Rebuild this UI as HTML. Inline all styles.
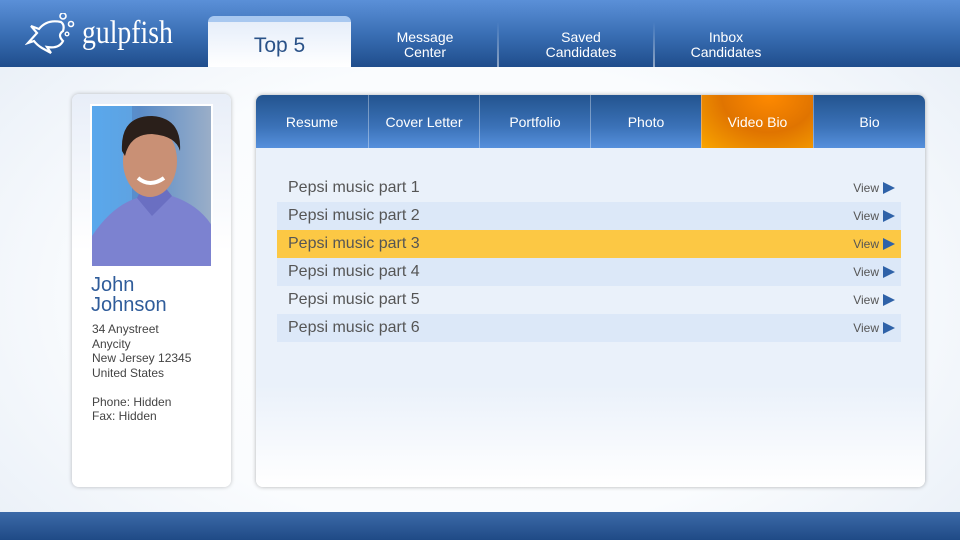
<!DOCTYPE html>
<html><head><meta charset="utf-8"><style>
*{margin:0;padding:0;box-sizing:border-box}
body{width:960px;height:540px;overflow:hidden;position:relative;font-family:"Liberation Sans",sans-serif;background:radial-gradient(ellipse at 50% 55%,#fff 0%,#fafcfe 55%,#e6edf6 100%)}
.hdr{position:absolute;left:0;top:0;width:960px;height:67px;background:linear-gradient(#5b90d8,#3a6fb5 50%,#1f4d8c)}
.logo{position:absolute;left:82px;top:15px;color:#fff;font-family:"Liberation Serif",serif;font-size:33px;transform:scaleX(0.84);transform-origin:left}
.tab5{position:absolute;left:208px;top:16px;width:143px;height:51px;border-radius:6px 6px 0 0;background:linear-gradient(#a8c8f0 0,#a8c8f0 6px,#e6eefa 6px,#fff 100%);color:#2a5288;font-size:21px;text-align:center;padding-top:18px}
.nav{position:absolute;top:30px;color:#fff;font-size:14px;text-align:center;line-height:15px;width:140px}
.sep{position:absolute;top:22px;width:2px;height:45px;background:linear-gradient(rgba(255,255,255,0),rgba(255,255,255,.5))}
.ftr{position:absolute;left:0;top:512px;width:960px;height:28px;background:linear-gradient(#3c6aa8,#1f4a86)}
.card{position:absolute;left:72px;top:94px;width:159px;height:393px;border-radius:7px;background:linear-gradient(#e8eef8,#fff 40%);box-shadow:0 0 4px rgba(0,0,0,.25)}
.photo{position:absolute;left:18px;top:10px;width:123px;height:164px;border:2px solid #fff;overflow:hidden;background:linear-gradient(90deg,#4d9be6,#5a8cc8 40%,#9aaec8)}
.name{position:absolute;left:19px;top:181px;color:#2f5c9a;font-size:20px;line-height:20px}
.addr{position:absolute;left:20px;top:228px;color:#444;font-size:12px;line-height:14.5px}
.panel{position:absolute;left:256px;top:95px;width:669px;height:392px;border-radius:7px;background:#fff;box-shadow:0 0 4px rgba(0,0,0,.3);overflow:hidden}
.tabs{position:absolute;left:0;top:0;width:669px;height:53px;background:linear-gradient(#23548f,#3b72b8 60%,#5690dc)}
.t{position:absolute;top:0;height:53px;color:#fff;font-size:14px;text-align:center;padding-top:19px;border-left:1px solid rgba(255,255,255,.35)}
.on{background:radial-gradient(ellipse at 60% 0%,#ff8a00,#e07400 50%,#f9a500);}
.content{position:absolute;left:0;top:53px;width:669px;height:339px;background:linear-gradient(#eaf1fa,#eaf1fa 70%,#fff)}
.row{position:absolute;left:21px;width:624px;height:28px;color:#555;font-size:16px;padding:5px 0 0 11px}
.v{position:absolute;right:6px;top:7px;font-size:12px;color:#555}
.v i{display:inline-block;width:0;height:0;border-left:12px solid #2f62a8;border-top:6px solid transparent;border-bottom:6px solid transparent;vertical-align:-2px;margin-left:4px}
</style></head><body>
<div class="hdr">
<svg style="position:absolute;left:25px;top:13px" width="56" height="42" viewBox="0 0 56 42" fill="none" stroke="#fff" stroke-width="2.2">
<path d="M3 30 L12 20 L6 13 L14 16 Q22 6 36 9 Q40 12 38 18 Q32 22 38 28 Q34 36 22 34 L26 40 L17 35 Q12 32 9 28 Z"/>
<circle cx="38" cy="3" r="3" stroke-width="1.6"/><circle cx="46" cy="11" r="2.5" stroke-width="1.6"/><circle cx="42" cy="21" r="1.8" stroke-width="1.4"/>
</svg>
<div class="logo">gulpfish</div>
<div class="tab5">Top 5</div>
<div class="nav" style="left:355px">Message<br>Center</div>
<div class="sep" style="left:497px"></div>
<div class="nav" style="left:511px">Saved<br>Candidates</div>
<div class="sep" style="left:653px"></div>
<div class="nav" style="left:656px">Inbox<br>Candidates</div>
</div>
<div class="card">
<div class="photo">
<svg width="123" height="164" viewBox="0 0 123 164">
<rect x="0" y="0" width="40" height="130" fill="#63b0f0" opacity=".6"/>
<path d="M0 164 L0 130 Q20 100 45 92 L80 90 Q110 100 123 125 L123 164 Z" fill="#7c82d0"/>
<path d="M45 92 L60 110 L80 90 L72 80 L50 82 Z" fill="#6a6fc2"/>
<ellipse cx="58" cy="55" rx="27" ry="36" fill="#c99075"/>
<path d="M30 45 Q28 10 60 10 Q90 12 88 45 Q84 30 60 28 Q38 28 33 50 Z" fill="#2a1f1a"/>
<path d="M46 72 Q58 82 72 72" stroke="#fff" stroke-width="4" fill="none"/>
</svg>
</div>
<div class="name">John<br>Johnson</div>
<div class="addr">34 Anystreet<br>Anycity<br>New Jersey 12345<br>United States<br><br>Phone: Hidden<br>Fax: Hidden</div>
</div>
<div class="panel">
<div class="tabs">
<div class="t" style="left:0;width:112px;border-left:none">Resume</div>
<div class="t" style="left:112px;width:111px">Cover Letter</div>
<div class="t" style="left:223px;width:111px">Portfolio</div>
<div class="t" style="left:334px;width:111px">Photo</div>
<div class="t on" style="left:445px;width:112px">Video Bio</div>
<div class="t" style="left:557px;width:112px">Bio</div>
</div>
<div class="content">
<div class="row" style="top:26px">Pepsi music part 1<span class="v">View<i></i></span></div>
<div class="row" style="top:54px;background:#dce8f8">Pepsi music part 2<span class="v">View<i></i></span></div>
<div class="row" style="top:82px;background:#fcc844">Pepsi music part 3<span class="v">View<i></i></span></div>
<div class="row" style="top:110px;background:#dce8f8">Pepsi music part 4<span class="v">View<i></i></span></div>
<div class="row" style="top:138px">Pepsi music part 5<span class="v">View<i></i></span></div>
<div class="row" style="top:166px;background:#dce8f8">Pepsi music part 6<span class="v">View<i></i></span></div>
</div>
</div>
<div class="ftr"></div>
</body></html>
